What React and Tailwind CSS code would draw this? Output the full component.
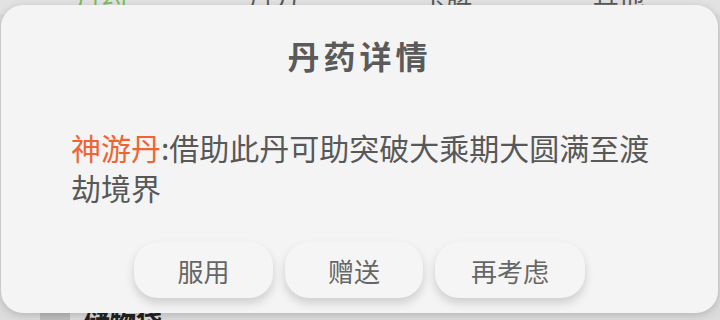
import React from 'react'

const font = { fontFamily: '"Noto Sans CJK SC", "Noto Sans", sans-serif' }

const tabs = [
  { label: '丹药', active: true },
  { label: '丹方' },
  { label: '玉牌' },
  { label: '其他' },
]

const actions = [
  { label: '服用', width: 'w-[139px]' },
  { label: '赠送', width: 'w-[138px]' },
  { label: '再考虑', width: 'w-[150px]' },
]

const App = () => {
  return (
    <div className="relative w-[720px] h-[320px] overflow-hidden bg-[#dcdcdc]" style={font}>
      {/* page behind the dialog */}
      <div className="flex flex-col h-full">
        <div className="grid grid-cols-4 -mt-[18px] h-[32px] px-[15px] bg-[#e2e2e2]">
          {tabs.map(tab => (
            <div
              key={tab.label}
              className={`text-center text-[26px] leading-[30px] ${tab.active ? 'text-[#79be58]' : 'text-[#5a5a5a]'}`}
            >
              {tab.label}
            </div>
          ))}
        </div>
        <div className="flex-1" />
        <div className="flex items-start gap-[14px] pl-[40px] h-[14px]">
          <div className="w-[30px] h-[30px] bg-[#bdbdbd] rounded-[3px]" />
          <div className="text-[26px] leading-[30px] text-[#222] font-bold">储物袋</div>
        </div>
      </div>

      {/* dialog */}
      <div className="absolute left-[1px] top-[5px] w-[717px] h-[308px] rounded-[22px] bg-[#f4f4f4] shadow-[0_2px_8px_rgba(0,0,0,0.18)] flex flex-col">
        <h2 className="mt-[30px] text-center text-[32px] leading-[40px] font-bold tracking-[4px] text-[#5a5a5a]">
          丹药详情
        </h2>
        <p className="mt-[52px] pl-[70px] pr-[60px] text-[30px] leading-[40px] text-[#585858]">
          <span className="text-[#ef6431]">神游丹</span>:借助此丹可助突破大乘期大圆满至渡劫境界
        </p>
        <div className="mt-auto mb-[15px] flex justify-center gap-[12px]">
          {actions.map(a => (
            <button
              key={a.label}
              className={`${a.width} h-[56px] rounded-[24px] bg-[#f5f5f5] text-[26px] text-[#666] shadow-[0_5px_10px_rgba(0,0,0,0.16)]`}
            >
              {a.label}
            </button>
          ))}
        </div>
      </div>
    </div>
  )
}

export default App
